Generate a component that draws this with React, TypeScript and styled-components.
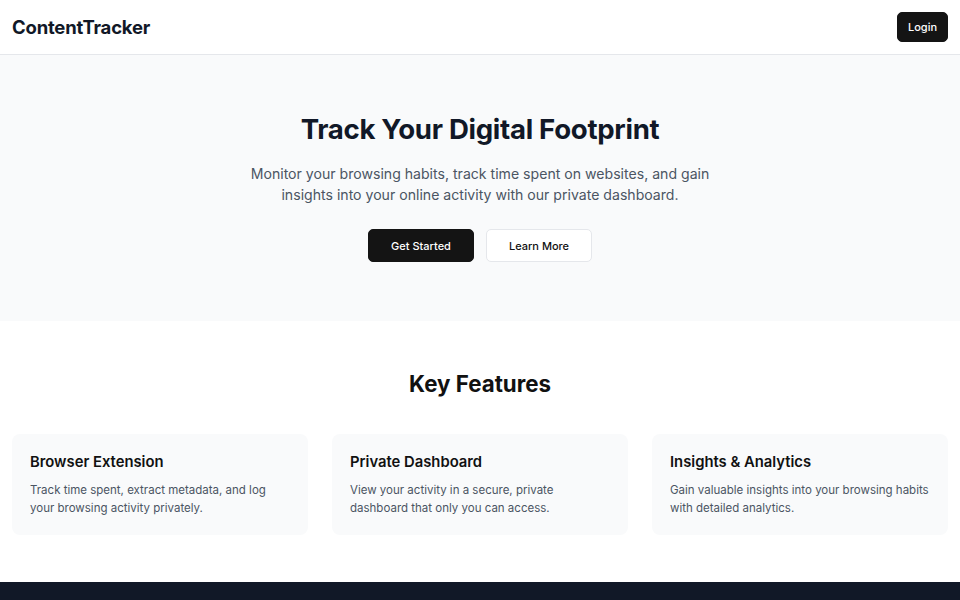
import React from "react";
import styled, { createGlobalStyle } from "styled-components";

const Global = createGlobalStyle`
  * { box-sizing: border-box; }
  body {
    margin: 0;
    font-family: Inter, "Noto Sans", sans-serif;
    color: #111827;
    background: #ffffff;
  }
`;

const features = [
  {
    title: "Browser Extension",
    text: "Track time spent, extract metadata, and log your browsing activity privately.",
  },
  {
    title: "Private Dashboard",
    text: "View your activity in a secure, private dashboard that only you can access.",
  },
  {
    title: "Insights & Analytics",
    text: "Gain valuable insights into your browsing habits with detailed analytics.",
  },
];

const App = () => {
  return (
    <Page>
      <Global />
      <Header>
        <Logo>ContentTracker</Logo>
        <Button $primary>Login</Button>
      </Header>
      <Hero>
        <HeroTitle>Track Your Digital Footprint</HeroTitle>
        <HeroText>
          Monitor your browsing habits, track time spent on websites, and gain
          insights into your online activity with our private dashboard.
        </HeroText>
        <Actions>
          <Button $primary $wide>Get Started</Button>
          <Button $wide>Learn More</Button>
        </Actions>
      </Hero>
      <Features>
        <SectionTitle>Key Features</SectionTitle>
        <Grid>
          {features.map((f) => (
            <Card key={f.title}>
              <CardTitle>{f.title}</CardTitle>
              <CardText>{f.text}</CardText>
            </Card>
          ))}
        </Grid>
      </Features>
      <Footer />
    </Page>
  );
};

export default App;

const Page = styled.div`
  min-height: 100vh;
  display: flex;
  flex-direction: column;
`;

const Header = styled.header`
  height: 55px;
  padding: 0 12px;
  display: flex;
  align-items: center;
  justify-content: space-between;
  border-bottom: 1px solid #e5e7eb;
  background: #ffffff;
`;

const Logo = styled.div`
  font-size: 18.5px;
  font-weight: 700;
  color: #111827;
  letter-spacing: -0.2px;
`;

const Button = styled.button<{ $primary?: boolean; $wide?: boolean }>`
  font-family: Inter, "Noto Sans", sans-serif;
  font-size: 11px;
  font-weight: 500;
  height: ${(p) => (p.$wide ? "33px" : "30px")};
  width: ${(p) => (p.$wide ? "106px" : "51px")};
  border-radius: 5px;
  cursor: pointer;
  background: ${(p) => (p.$primary ? "#141414" : "#ffffff")};
  color: ${(p) => (p.$primary ? "#ffffff" : "#111111")};
  border: 1px solid ${(p) => (p.$primary ? "#141414" : "#e5e7eb")};
`;

const Hero = styled.section`
  background: #f9fafb;
  padding: 56px 24px 59px;
  display: flex;
  flex-direction: column;
  align-items: center;
  text-align: center;
`;

const HeroTitle = styled.h1`
  margin: 0;
  font-size: 27.6px;
  line-height: 36px;
  font-weight: 700;
  color: #111827;
  letter-spacing: -0.3px;
`;

const HeroText = styled.p`
  margin: 16px 0 0;
  max-width: 490px;
  font-size: 14.1px;
  line-height: 21px;
  color: #4b5563;
`;

const Actions = styled.div`
  margin-top: 24px;
  display: flex;
  gap: 12px;
`;

const Features = styled.section`
  padding: 47px 12px 47px;
  background: #ffffff;
`;

const SectionTitle = styled.h2`
  margin: 0 0 34px;
  text-align: center;
  font-size: 22.3px;
  line-height: 32px;
  font-weight: 700;
  color: #111111;
`;

const Grid = styled.div`
  display: grid;
  grid-template-columns: repeat(3, 1fr);
  gap: 24px;
`;

const Card = styled.div`
  background: #f9fafb;
  border-radius: 8px;
  padding: 18px 18px 18px;
  height: 101px;
`;

const CardTitle = styled.h3`
  margin: 0;
  font-size: 14.8px;
  line-height: 20px;
  font-weight: 600;
  color: #111111;
`;

const CardText = styled.p`
  margin: 9px 0 0;
  font-size: 11.5px;
  line-height: 18px;
  color: #4b5563;
`;

const Footer = styled.footer`
  flex: 1;
  min-height: 60px;
  background: #111827;
`;
